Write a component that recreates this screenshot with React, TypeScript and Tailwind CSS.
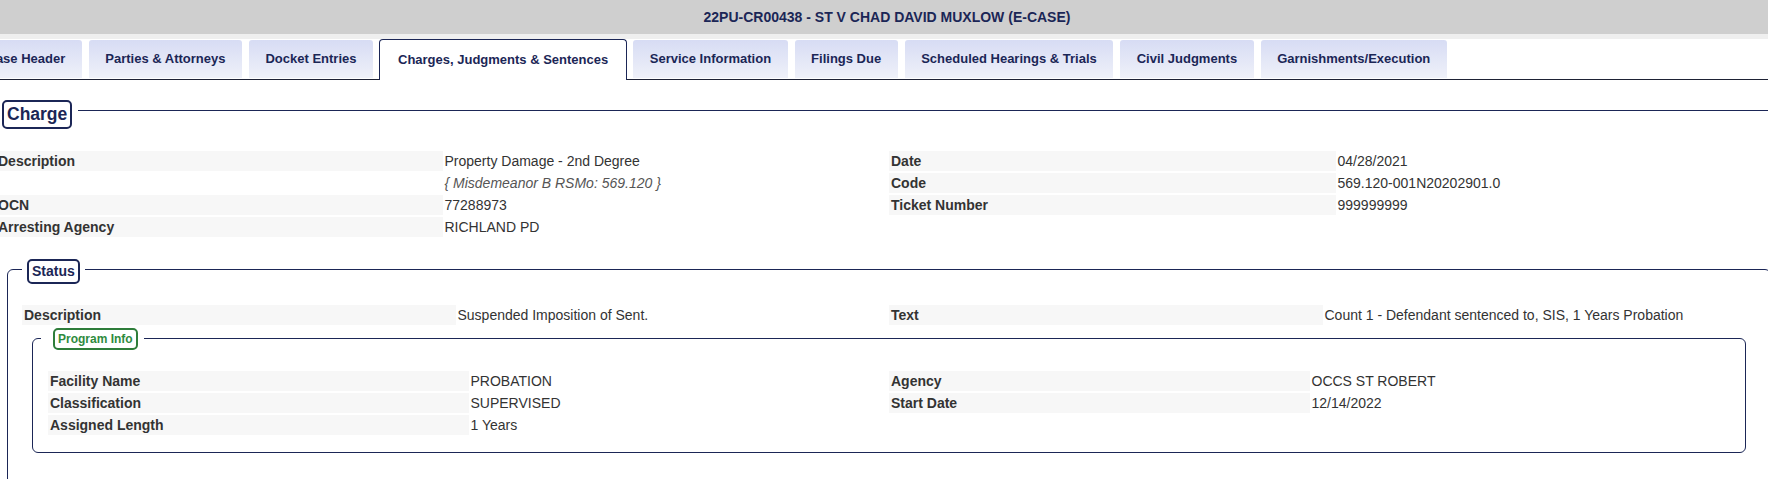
import { FC, ReactNode } from "react"
import clsx from "clsx"

interface IRow {
  label?: string
  value?: ReactNode
}

const TABS = [
  "Case Header",
  "Parties & Attorneys",
  "Docket Entries",
  "Charges, Judgments & Sentences",
  "Service Information",
  "Filings Due",
  "Scheduled Hearings & Trials",
  "Civil Judgments",
  "Garnishments/Execution",
]
const ACTIVE_TAB = "Charges, Judgments & Sentences"

const DataTable: FC<{ rows: IRow[] }> = ({ rows }) => (
  <div className="flex flex-col gap-[2px]">
    {rows.map((row, key) => (
      <div key={key} className="flex h-[20px] leading-[20px]">
        <div
          className={clsx(
            "w-1/2 pl-[2px] font-bold whitespace-nowrap",
            row.label && "bg-[#f7f7f7]"
          )}
        >
          {row.label}
        </div>
        <div className="w-1/2 pl-[2px] whitespace-nowrap">{row.value}</div>
      </div>
    ))}
  </div>
)

const TwoColumns: FC<{ left: IRow[]; right: IRow[] }> = ({ left, right }) => (
  <div className="grid grid-cols-2">
    <DataTable rows={left} />
    <DataTable rows={right} />
  </div>
)

const Tabs: FC = () => (
  <div className="-ml-[31px] flex items-end gap-[5px] border-b border-[#1e2235]">
    {TABS.map((tab) =>
      tab === ACTIVE_TAB ? (
        <div
          key={tab}
          className="-mb-px flex h-[41px] shrink-0 items-center whitespace-nowrap rounded-t-[4px] border border-b-0 border-[#1b2656] bg-white px-[18px] text-[13px] font-bold text-[#1b2656]"
        >
          {tab}
        </div>
      ) : (
        <div
          key={tab}
          className="flex h-[40px] shrink-0 items-center whitespace-nowrap rounded-t-[4px] border border-transparent bg-linear-to-b from-[#d7dcf4] to-[#eff1f9] bg-clip-padding px-[16.5px] text-[13px] font-bold text-[#1b2656]"
        >
          {tab}
        </div>
      )
    )}
  </div>
)

export default function App() {
  return (
    <div className="h-screen overflow-hidden bg-white font-[family-name:Liberation_Sans,Arial,sans-serif] text-[14px] text-[#333]">
      <div className="flex h-[39px] items-center justify-center border-b-[5px] border-[#efefef] bg-[#cfcfcf] pl-[6px] text-[14px] font-bold text-[#1b2656]">
        22PU-CR00438 - ST V CHAD DAVID MUXLOW (E-CASE)
      </div>

      <Tabs />

      <fieldset className="-ml-[19px] mt-[11px] w-[1816px] rounded-[6px] border border-[#1b2656] px-[14px] pt-[22px] pb-[20px]">
        <legend className="px-[6px] pt-[9px]">
          <span className="block rounded-[5px] border-2 border-[#1b2656] px-[3px] py-[2px] text-[17.5px] leading-[21px] font-bold text-[#1b2656]">
            Charge
          </span>
        </legend>

        <TwoColumns
          left={[
            { label: "Description", value: "Property Damage - 2nd Degree" },
            {
              value: (
                <span className="italic text-[#555]">
                  {"{ Misdemeanor B RSMo: 569.120 }"}
                </span>
              ),
            },
            { label: "OCN", value: "77288973" },
            { label: "Arresting Agency", value: "RICHLAND PD" },
          ]}
          right={[
            { label: "Date", value: "04/28/2021" },
            { label: "Code", value: "569.120-001N20202901.0" },
            { label: "Ticket Number", value: "999999999" },
          ]}
        />

        <fieldset className="mx-[11px] mt-[17px] rounded-[6px] border border-[#1b2656] px-[14px] pt-[21px] pb-[40px]">
          <legend className="px-[5px] pt-[5px]">
            <span className="block rounded-[5px] border-2 border-[#1b2656] px-[3px] py-[2px] text-[14px] leading-[17px] font-bold text-[#1b2656]">
              Status
            </span>
          </legend>

          <TwoColumns
            left={[{ label: "Description", value: "Suspended Imposition of Sent." }]}
            right={[
              { label: "Text", value: "Count 1 - Defendant sentenced to, SIS, 1 Years Probation" },
            ]}
          />

          <fieldset className="mx-[10px] mt-[1px] rounded-[6px] border border-[#1b2656] px-[15px] pt-[21px] pb-[17px]">
            <legend className="-ml-[7px] pl-[12px] pr-[6px] pt-[2px]">
              <span className="block rounded-[5px] border-2 border-[#2e7d3a] px-[3px] py-[2px] text-[12px] leading-[14px] font-bold text-[#2e8b3e]">
                Program Info
              </span>
            </legend>

            <TwoColumns
              left={[
                { label: "Facility Name", value: "PROBATION" },
                { label: "Classification", value: "SUPERVISED" },
                { label: "Assigned Length", value: "1 Years" },
              ]}
              right={[
                { label: "Agency", value: "OCCS ST ROBERT" },
                { label: "Start Date", value: "12/14/2022" },
              ]}
            />
          </fieldset>
        </fieldset>
      </fieldset>
    </div>
  )
}
